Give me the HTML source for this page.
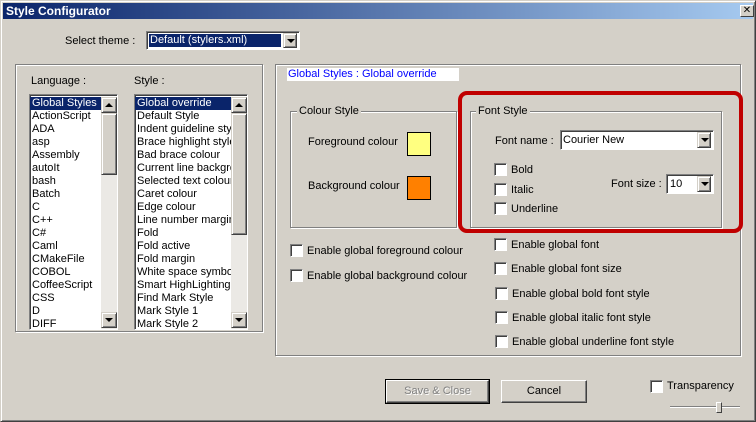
<!DOCTYPE html>
<html><head><style>
body{margin:0;width:756px;height:422px;overflow:hidden;background:#d4d0c8;font-family:"Liberation Sans",sans-serif;font-size:11px;color:#000;position:relative}
.a{position:absolute;white-space:nowrap}
.win{position:absolute;left:0;top:0;width:754px;height:420px;border:1px solid;border-color:#d4d0c8 #404040 #404040 #d4d0c8;box-shadow:inset 1px 1px #fff,inset -1px -1px #808080}
.title{position:absolute;left:3px;top:3px;width:750px;height:16px;background:linear-gradient(90deg,#0a246a,#a6caf0);color:#fff;font-weight:bold;font-size:12px;line-height:16px;padding-left:3px;box-sizing:border-box}
.close{position:absolute;left:737px;top:2px;width:12px;height:10px;background:#d4d0c8;border:1px solid;border-color:#fff #404040 #404040 #fff;font-size:10px;line-height:10px;text-align:center;color:#000;font-weight:normal}
.grp{position:absolute;border:1px solid #808080;box-shadow:1px 1px #fff,inset 1px 1px #fff}
.cb{position:absolute;width:11px;height:11px;background:#fff;border:1px solid;border-color:#808080 #fff #fff #808080;box-shadow:inset 1px 1px #404040}
.sunk{position:absolute;background:#fff;border:1px solid;border-color:#808080 #fff #fff #808080;box-shadow:inset 1px 1px #404040}
.dd{position:absolute;width:14px;background:#d4d0c8;border:1px solid;border-color:#d4d0c8 #404040 #404040 #d4d0c8;box-shadow:inset 1px 1px #fff,inset -1px -1px #808080;box-sizing:border-box}
.dd:after{content:"";position:absolute;left:3px;top:50%;margin-top:-2px;border-left:4px solid transparent;border-right:4px solid transparent;border-top:4px solid #000}
.list{position:absolute;background:#fff;border:1px solid;border-color:#808080 #fff #fff #808080;box-shadow:inset 1px 1px #404040;overflow:hidden}
.list .r{height:13px;line-height:13px;padding-left:2px;white-space:nowrap}
.sel{background:#0a246a;color:#fff}
.sb{position:absolute;top:2px;width:16px;bottom:0;background:#ebe9e5;z-index:2}
.btn{position:absolute;width:16px;height:16px;background:#d4d0c8;border:1px solid;border-color:#d4d0c8 #404040 #404040 #d4d0c8;box-shadow:inset 1px 1px #fff,inset -1px -1px #808080;box-sizing:border-box;left:0}
.arr{position:absolute;left:3px;width:0;height:0;border-left:4px solid transparent;border-right:4px solid transparent}
.pb{position:absolute;background:#d4d0c8;border:1px solid;border-color:#fff #404040 #404040 #fff;box-shadow:inset -1px -1px #808080;text-align:center;line-height:21px}
</style></head><body>
<div class="win"></div>
<div class="title">Style Configurator<div class="close">✕</div></div>

<div class="a" style="left:65px;top:35px">Select theme :</div>
<div class="sunk" style="left:146px;top:31px;width:152px;height:17px"><div style="position:absolute;left:2px;top:2px;width:131px;height:13px;background:#0a246a;color:#fff;line-height:13px;padding-left:1px">Default (stylers.xml)</div><div class="dd" style="left:136px;top:1px;height:15px"></div></div>

<div class="grp" style="left:15px;top:64px;width:246px;height:266px"></div>
<div class="a" style="left:31px;top:75px">Language :</div>
<div class="a" style="left:134px;top:75px">Style :</div>
<div class="list" style="left:29px;top:94px;width:87px;height:234px">
<div style="margin-top:2px" class="r sel">Global Styles</div><div class="r">ActionScript</div><div class="r">ADA</div><div class="r">asp</div><div class="r">Assembly</div><div class="r">autoIt</div><div class="r">bash</div><div class="r">Batch</div><div class="r">C</div><div class="r">C++</div><div class="r">C#</div><div class="r">Caml</div><div class="r">CMakeFile</div><div class="r">COBOL</div><div class="r">CoffeeScript</div><div class="r">CSS</div><div class="r">D</div><div class="r">DIFF</div>
<div class="sb" style="left:71px"><div class="btn" style="top:0"><div class="arr" style="top:5px;border-bottom:4px solid #000"></div></div><div class="btn" style="top:16px;height:62px"></div><div class="btn" style="bottom:1px"><div class="arr" style="top:5px;border-top:4px solid #000"></div></div></div>
</div>
<div class="list" style="left:134px;top:94px;width:112px;height:234px">
<div style="margin-top:2px" class="r sel">Global override</div><div class="r">Default Style</div><div class="r">Indent guideline style</div><div class="r">Brace highlight style</div><div class="r">Bad brace colour</div><div class="r">Current line background</div><div class="r">Selected text colour</div><div class="r">Caret colour</div><div class="r">Edge colour</div><div class="r">Line number margin</div><div class="r">Fold</div><div class="r">Fold active</div><div class="r">Fold margin</div><div class="r">White space symbol</div><div class="r">Smart HighLighting</div><div class="r">Find Mark Style</div><div class="r">Mark Style 1</div><div class="r">Mark Style 2</div>
<div class="sb" style="left:96px"><div class="btn" style="top:0"><div class="arr" style="top:5px;border-bottom:4px solid #000"></div></div><div class="btn" style="top:16px;height:122px"></div><div class="btn" style="bottom:1px"><div class="arr" style="top:5px;border-top:4px solid #000"></div></div></div>
</div>

<div class="grp" style="left:275px;top:64px;width:464px;height:290px"></div>
<div class="a" style="left:287px;top:68px;width:172px;height:13px;background:#fff;color:#0000ff;line-height:13px;padding-left:1px;box-sizing:border-box">Global Styles : Global override</div>

<div class="grp" style="left:290px;top:111px;width:165px;height:115px"></div>
<div class="a" style="left:297px;top:105px;background:#d4d0c8;padding:0 2px">Colour Style</div>
<div class="a" style="left:308px;top:136px">Foreground colour</div>
<div class="a" style="left:308px;top:180px">Background colour</div>
<div class="a" style="left:407px;top:132px;width:22px;height:22px;background:#ffff80;border:1px solid #000"></div>
<div class="a" style="left:407px;top:176px;width:22px;height:22px;background:#ff8000;border:1px solid #000"></div>

<div class="grp" style="left:470px;top:111px;width:250px;height:115px"></div>
<div class="a" style="left:476px;top:105px;background:#d4d0c8;padding:0 2px">Font Style</div>
<div class="a" style="left:495px;top:135px">Font name :</div>
<div class="sunk" style="left:560px;top:130px;width:152px;height:18px"><div class="a" style="left:2px;top:3px">Courier New</div><div class="dd" style="left:136px;top:1px;height:16px"></div></div>
<div class="cb" style="left:494px;top:163px"></div><div class="a" style="left:511px;top:164px">Bold</div>
<div class="cb" style="left:494px;top:183px"></div><div class="a" style="left:511px;top:184px">Italic</div>
<div class="cb" style="left:494px;top:202px"></div><div class="a" style="left:511px;top:203px">Underline</div>
<div class="a" style="left:611px;top:178px">Font size :</div>
<div class="sunk" style="left:666px;top:174px;width:46px;height:18px"><div class="a" style="left:3px;top:3px">10</div><div class="dd" style="left:30px;top:1px;height:16px"></div></div>

<div class="a" style="left:458px;top:91px;width:277px;height:134px;border:4px solid #c00000;border-radius:9px"></div>

<div class="cb" style="left:290px;top:244px"></div><div class="a" style="left:307px;top:245px">Enable global foreground colour</div>
<div class="cb" style="left:290px;top:269px"></div><div class="a" style="left:307px;top:270px">Enable global background colour</div>
<div class="cb" style="left:494px;top:238px"></div><div class="a" style="left:511px;top:239px">Enable global font</div>
<div class="cb" style="left:494px;top:262px"></div><div class="a" style="left:511px;top:263px">Enable global font size</div>
<div class="cb" style="left:495px;top:287px"></div><div class="a" style="left:512px;top:288px">Enable global bold font style</div>
<div class="cb" style="left:495px;top:311px"></div><div class="a" style="left:512px;top:312px">Enable global italic font style</div>
<div class="cb" style="left:495px;top:335px"></div><div class="a" style="left:512px;top:336px">Enable global underline font style</div>

<div class="pb" style="left:386px;top:380px;width:101px;height:21px;color:#808080;text-shadow:1px 1px #fff;outline:1px solid #000">Save &amp; Close</div>
<div class="pb" style="left:501px;top:380px;width:84px;height:21px">Cancel</div>

<div class="cb" style="left:650px;top:380px"></div><div class="a" style="left:667px;top:380px">Transparency</div>
<div class="a" style="left:670px;top:406px;width:70px;height:2px;border-top:1px solid #808080;border-bottom:1px solid #fff;background:#404040;box-sizing:border-box"></div>
<div class="a" style="left:716px;top:402px;width:4px;height:9px;background:#d4d0c8;border:1px solid;border-color:#fff #404040 #404040 #fff"></div>
</body></html>
